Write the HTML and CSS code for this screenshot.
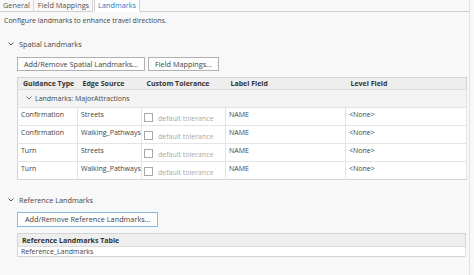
FILE: index.html
```html
<!DOCTYPE html>
<html>
<head>
<meta charset="utf-8">
<link rel="stylesheet" href="styles.css">
</head>
<body>
<div class="panel">
  <div class="tabs">
    <div class="tab">General</div>
    <div class="tab">Field Mappings</div>
    <div class="tab active">Landmarks</div>
    <div class="tab-fill"></div>
  </div>
  <div class="content">
    <div class="desc">Configure landmarks to enhance travel directions.</div>

    <div class="section-head">
      <svg class="chev" width="6" height="4" viewBox="0 0 6 4"><path d="M0.5 0.5 L3 3 L5.5 0.5" fill="none" stroke="#555" stroke-width="1"/></svg>
      <span>Spatial Landmarks</span>
    </div>
    <div class="btn-row">
      <div class="btn">Add/Remove Spatial Landmarks...</div>
      <div class="btn">Field Mappings...</div>
    </div>
    <table class="grid">
      <colgroup>
        <col class="c1"><col class="c2"><col class="c3"><col class="c4"><col class="c5">
      </colgroup>
      <thead>
        <tr><th>Guidance Type</th><th>Edge Source</th><th>Custom Tolerance</th><th>Label Field</th><th>Level Field</th></tr>
      </thead>
      <tbody>
        <tr class="group"><td colspan="5"><svg class="chev small" width="6" height="4" viewBox="0 0 6 4"><path d="M0.5 0.5 L3 3 L5.5 0.5" fill="none" stroke="#666" stroke-width="0.9"/></svg>Landmarks: MajorAttractions</td></tr>
        <tr><td>Confirmation</td><td>Streets</td><td class="tol"><span class="cb"></span><span class="ph">default tolerance</span></td><td>NAME</td><td>&lt;None&gt;</td></tr>
        <tr><td>Confirmation</td><td>Walking_Pathways</td><td class="tol"><span class="cb"></span><span class="ph">default tolerance</span></td><td>NAME</td><td>&lt;None&gt;</td></tr>
        <tr><td>Turn</td><td>Streets</td><td class="tol"><span class="cb"></span><span class="ph">default tolerance</span></td><td>NAME</td><td>&lt;None&gt;</td></tr>
        <tr><td>Turn</td><td>Walking_Pathways</td><td class="tol"><span class="cb"></span><span class="ph">default tolerance</span></td><td>NAME</td><td>&lt;None&gt;</td></tr>
      </tbody>
    </table>

    <div class="section-head second">
      <svg class="chev" width="6" height="4" viewBox="0 0 6 4"><path d="M0.5 0.5 L3 3 L5.5 0.5" fill="none" stroke="#555" stroke-width="1"/></svg>
      <span>Reference Landmarks</span>
    </div>
    <div class="btn-row second">
      <div class="btn focus">Add/Remove Reference Landmarks...</div>
    </div>
    <table class="grid ref">
      <thead><tr><th>Reference Landmarks Table</th></tr></thead>
      <tbody><tr><td>Reference_Landmarks</td></tr></tbody>
    </table>
  </div>
</div>
</body>
</html>
```

FILE: styles.css
```css
* { box-sizing: border-box; }
html, body { margin: 0; padding: 0; }
body {
  background: #f8f8f8;
  font-family: "Open Sans", "Noto Sans", sans-serif;
  font-size: 7px;
  color: #444;
  width: 474px;
  height: 275px;
  overflow: hidden;
}
.panel {
  width: 470px;
  height: 275px;
  border-right: 1px solid #e2e2e2;
}
.tabs {
  display: flex;
  height: 12px;
  align-items: stretch;
  font-size: 7.3px;
}
.tab {
  padding: 0 3px 0 4px;
  line-height: 11px;
  border-bottom: 1px solid #d0d0d0;
  border-right: 1px solid #d8d8d8;
  color: #555;
}
.tab:first-child { padding-left: 3px; }
.tab.active {
  background: #fff;
  color: #2a7ac6;
  border: 1px solid #d0d0d0;
  border-bottom: 1px solid #fff;
  border-top: none;
  padding: 0 3px;
  margin-left: 1px;
}
.tab-fill {
  flex: 1;
  border-bottom: 1px solid #d0d0d0;
}
.content {
  padding-left: 4px;
}
.desc {
  margin-top: 4px;
  line-height: 10px;
}
.section-head {
  display: flex;
  align-items: center;
  margin-top: 13px;
  height: 10px;
  padding-left: 4px;
  font-size: 7.3px;
}
.section-head.second { margin-top: 15px; }
.chev { margin-right: 5px; }
.btn-row {
  display: flex;
  gap: 3px;
  margin-top: 8px;
  padding-left: 13px;
}
.btn-row.second { margin-top: 7px; }
.btn {
  height: 14px;
  line-height: 12px;
  padding: 0 6px;
  background: #fdfdfd;
  border: 1px solid #b0b0b0;
  color: #444;
  font-size: 7.3px;
}
.btn.focus {
  border-color: #8ab8de;
  height: 15px;
  line-height: 13px;
  padding: 0 7px;
}
.grid {
  margin-left: 13px;
  margin-top: 6px;
  width: 449px;
  border-collapse: collapse;
  table-layout: fixed;
  background: #fff;
  border: 1px solid #d4d4d4;
}
.grid col.c1 { width: 60px; }
.grid col.c2 { width: 64px; }
.grid col.c3 { width: 84px; }
.grid col.c4 { width: 120px; }
.grid col.c5 { width: 121px; }
.grid th {
  background: #eeeeee;
  text-align: left;
  font-weight: bold;
  color: #333;
  height: 12px;
  padding: 0 4px 0 5px;
  line-height: 11px;
  border-bottom: 1px solid #dcdcdc;
  white-space: nowrap;
}
.grid td {
  height: 18px;
  padding: 2px 3px 0;
  vertical-align: top;
  line-height: 10px;
  border-top: 1px solid #e4e4e4;
  border-right: 1px solid #e4e4e4;
  white-space: nowrap;
  overflow: hidden;
}
.grid tr.group td {
  background: #f4f4f4;
  height: 18px;
  padding: 0 6px 0 8px;
  vertical-align: middle;
}
.chev.small { margin-right: 3px; vertical-align: 0.5px; }
.grid td.tol {
  padding: 4px 2px 0;
}
.cb {
  display: inline-block;
  width: 9px;
  height: 9px;
  border: 1px solid #a8a8a8;
  background: #fff;
  vertical-align: top;
  margin-top: 1px;
}
.ph {
  color: #a9a9a9;
  margin-left: 5px;
  display: inline-block;
  margin-top: 2px;
}
.grid.ref { margin-top: 6px; }
.grid.ref th { height: 13px; padding-left: 4px; }
.grid.ref td { height: 10px; padding: 0 3px; line-height: 9px; }
```
